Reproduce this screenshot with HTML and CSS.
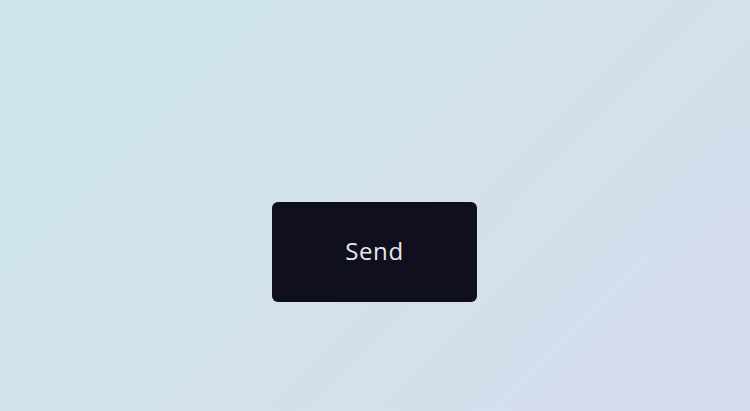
FILE: index.html
```html
<!DOCTYPE html>
<html lang="en">
<head>
<meta charset="utf-8">
<title>Send</title>
<link rel="stylesheet" href="styles.css">
</head>
<body>
<main class="stage">
  <button class="send-btn" type="button">Send</button>
</main>
</body>
</html>
```

FILE: styles.css
```css
html, body {
  margin: 0;
  height: 100%;
}
body {
  background: linear-gradient(135deg, #cde6ea 0%, #d2e1ea 50%, #d7dcee 100%);
  font-family: "Open Sans", "Noto Sans", sans-serif;
}
.stage {
  box-sizing: border-box;
  height: 100%;
  display: flex;
  justify-content: center;
  align-items: flex-start;
  padding-top: 202px;
}
.send-btn {
  width: 205px;
  height: 100px;
  background: #0f0f1f;
  color: #e8e8e8;
  border: none;
  border-radius: 6px;
  font-family: "Open Sans", "Noto Sans", sans-serif;
  font-size: 24px;
  font-weight: 400;
  letter-spacing: 0.6px;
  padding: 0 0 3px 0;
  margin-left: -1px;
  cursor: pointer;
}
```
